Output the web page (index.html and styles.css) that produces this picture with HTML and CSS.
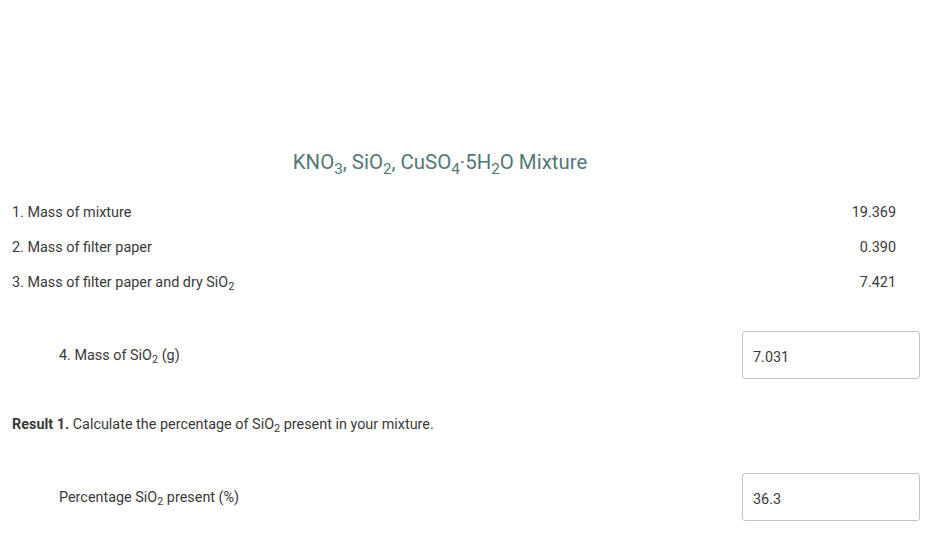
FILE: index.html
```html
<!DOCTYPE html>
<html>
<head>
<meta charset="utf-8">
<link rel="stylesheet" href="styles.css">
</head>
<body>
<div class="page">
  <h1 class="title">KNO<sub>3</sub>, SiO<sub>2</sub>, CuSO<sub>4</sub>·5H<sub>2</sub>O Mixture</h1>
  <div class="data">
    <div class="row"><span>1. Mass of mixture</span><span class="val">19.369</span></div>
    <div class="row"><span>2. Mass of filter paper</span><span class="val">0.390</span></div>
    <div class="row"><span>3. Mass of filter paper and dry SiO<sub>2</sub></span><span class="val">7.421</span></div>
  </div>
  <div class="field first">
    <span class="flabel">4. Mass of SiO<sub>2</sub> (g)</span>
    <div class="box">7.031</div>
  </div>
  <p class="result"><b>Result 1.</b> Calculate the percentage of SiO<sub>2</sub> present in your mixture.</p>
  <div class="field second">
    <span class="flabel">Percentage SiO<sub>2</sub> present (%)</span>
    <div class="box">36.3</div>
  </div>
</div>
</body>
</html>
```
FILE: styles.css
```css
html, body {
  margin: 0;
  padding: 0;
  background: #fff;
}
body {
  font-family: Roboto, "Liberation Sans", sans-serif;
  font-size: 14.4px;
  color: #3a3a3a;
}
.page {
  width: 932px;
}
sub {
  font-size: 0.75em;
  vertical-align: -0.3em;
  line-height: 0;
}
.title {
  width: 880px;
  margin: 0;
  padding-top: 149px;
  height: 27px;
  line-height: 27px;
  text-align: center;
  font-weight: 400;
  font-size: 20.4px;
  color: #527878;
}
.data {
  padding: 28px 36px 0 12px;
}
.row {
  display: flex;
  justify-content: space-between;
  height: 35px;
  line-height: 17px;
}
.val {
  text-align: right;
}
.field {
  display: flex;
  justify-content: space-between;
  align-items: center;
  padding-left: 59px;
  padding-right: 12px;
}
.field.first {
  margin-top: 22px;
}
.box {
  box-sizing: border-box;
  width: 178px;
  height: 48px;
  border: 1px solid #c4c4c4;
  border-radius: 3px;
  padding: 4px 10px 0;
  display: flex;
  align-items: center;
}
.result {
  margin: 0;
  padding: 37px 12px 0;
  height: 57px;
  line-height: 17px;
}
.result b {
  font-weight: 700;
}
```
